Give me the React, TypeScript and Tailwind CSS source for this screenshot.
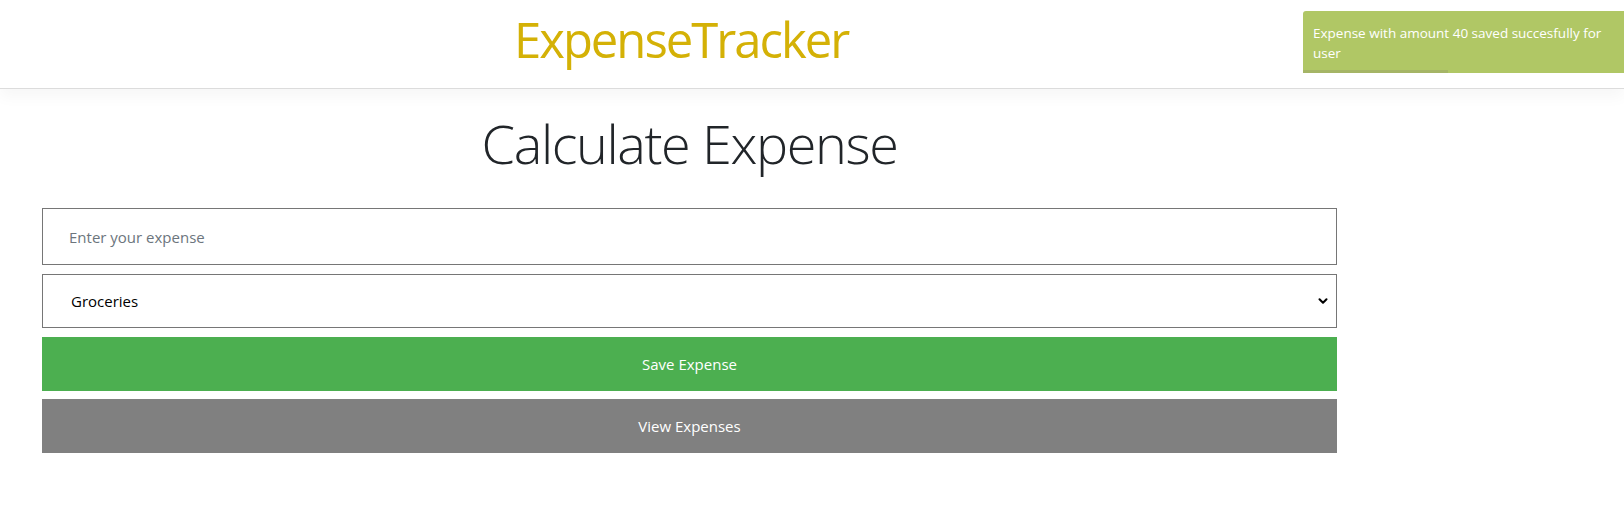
import {ChevronDown} from "lucide-react";

const font = {fontFamily: '"Open Sans", "Noto Sans", sans-serif'};

function Toast() {
    return (
        <div className="absolute top-[11px] left-[1303px] right-0 h-[62px] rounded-l-[3px] bg-[#b0c765] text-white">
            <p className="w-[321px] px-[10px] pt-[12px] text-[13.5px] leading-[20px]">
                Expense with amount 40 saved succesfully for user
            </p>
            <div className="absolute bottom-0 left-0 h-[3px] w-[145px] bg-[#a5b566]" />
        </div>
    );
}

export default function App() {
    return (
        <div className="relative min-h-[512px] bg-white text-[#212529]" style={font}>
            <header className="h-[89px] border-b border-[#dcdcdc] bg-white shadow-[0_8px_14px_rgba(0,0,0,0.035)]">
                <div className="flex pl-[514px] pt-[7px]">
                    <h1 className="text-[49px] leading-[64px] tracking-[-2px] text-[#d4b106]">ExpenseTracker</h1>
                </div>
            </header>
            <Toast />

            <main className="ml-[42px] w-[1295px]">
                <h2 className="mt-[12px] text-center text-[54px] font-light leading-[84px] tracking-[-1.4px]">
                    Calculate Expense
                </h2>

                <form className="mt-[23px] flex flex-col gap-[9px]" onSubmit={(e) => e.preventDefault()}>
                    <input
                        type="text"
                        placeholder="Enter your expense"
                        className="h-[57px] w-full border border-[#767676] px-[26px] text-[15px] outline-none placeholder:text-[#6c757d]"
                    />
                    <div className="relative h-[54px] border border-[#767676]">
                        <div className="flex h-full items-center pl-[28px] text-[15px] text-black">Groceries</div>
                        <ChevronDown className="absolute right-[6px] top-[19px] h-[14px] w-[14px] text-black" strokeWidth={3.5} />
                    </div>
                    <button type="submit" className="h-[54px] w-full bg-[#4caf50] text-[15px] text-white">
                        Save Expense
                    </button>
                    <button type="button" className="mt-[-1px] h-[54px] w-full bg-[#808080] text-[15px] text-white">
                        View Expenses
                    </button>
                </form>
            </main>
        </div>
    );
}
